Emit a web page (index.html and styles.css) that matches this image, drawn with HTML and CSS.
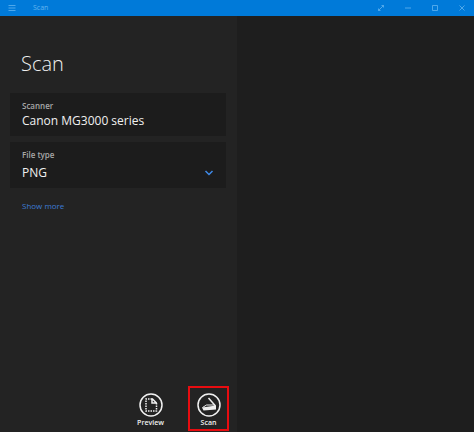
FILE: index.html
```
<!DOCTYPE html>
<html lang="en">
<head>
    <meta charset="UTF-8">
    <meta name="viewport" content="width=device-width, initial-scale=1.0">
    <title>Scan</title>
    <link rel="stylesheet" href="styles.css">
</head>
<body>
    <header class="titlebar">
        <button class="bar-button" type="button" aria-label="Menu">
            <svg viewBox="0 0 8 8"><path d="M0.5 1.5h7M0.5 4h7M0.5 6.5h7"/></svg>
        </button>
        <span class="app-name">Scan</span>
        <div class="window-buttons">
            <button class="bar-button" type="button" aria-label="Full screen">
                <svg viewBox="0 0 8 8"><path d="M1.5 6.5l5-5M4.5 1.5h2v2M1.5 4.5v2h2"/></svg>
            </button>
            <button class="bar-button" type="button" aria-label="Minimize">
                <svg viewBox="0 0 8 8"><path d="M1 4h6"/></svg>
            </button>
            <button class="bar-button" type="button" aria-label="Maximize">
                <svg viewBox="0 0 8 8"><path d="M1.5 1.5h5v5h-5z"/></svg>
            </button>
            <button class="bar-button" type="button" aria-label="Close">
                <svg viewBox="0 0 8 8"><path d="M1.5 1.5l5 5M6.5 1.5l-5 5"/></svg>
            </button>
        </div>
    </header>

    <main class="app">
        <section class="panel">
            <h1>Scan</h1>
            <div class="card">
                <span class="card-label">Scanner</span>
                <span class="card-value">Canon MG3000 series</span>
            </div>
            <div class="card">
                <label class="card-label" for="fileType">File type</label>
                <div class="select-row">
                    <select class="card-value file-type" id="fileType">
                        <option>PNG</option>
                    </select>
                    <svg class="chevron" viewBox="0 0 10 8"><path d="M1.5 2L5 5.5 8.5 2"/></svg>
                </div>
            </div>
            <a class="show-more" href="#">Show more</a>

            <div class="actions">
                <button class="action" type="button">
                    <svg viewBox="0 0 24 24">
                        <circle cx="12" cy="12" r="11"/>
                        <path class="dashed" d="M13 6H7v12h10.500v-8"/>
                        <path d="M13 5.500v4.500h5M13 5.500l4.500 4.500"/>
                    </svg>
                    <span>Preview</span>
                </button>
                <button class="action highlighted" type="button">
                    <svg viewBox="0 0 24 24">
                        <circle cx="12" cy="12" r="11"/>
                        <path d="M11.500 5l7 8"/>
                        <path class="thin" d="M5.500 14.500l4-2.500h8.500"/>
                        <path class="solid" d="M5 14.500l14-2v4l-12.500 1z"/>
                    </svg>
                    <span>Scan</span>
                </button>
            </div>
        </section>
        <section class="preview-area" aria-label="Preview area"></section>
    </main>
</body>
</html>
```

FILE: styles.css
```
* {
    box-sizing: border-box;
}
body {
    margin: 0;
    min-height: 100vh;
    display: flex;
    flex-direction: column;
    font-family: "Open Sans", "Noto Sans", sans-serif;
    background-color: #1e1e1e;
    color: #f0f0f0;
}
button {
    font-family: inherit;
    color: inherit;
    background: none;
    border: none;
    padding: 0;
    cursor: pointer;
}
svg {
    display: block;
    fill: none;
    stroke: currentColor;
}
.titlebar {
    display: flex;
    align-items: center;
    height: 16px;
    padding: 0 8px;
    background-color: #007ad9;
    color: #62b4f0;
}
.bar-button svg {
    width: 8px;
    height: 8px;
    stroke-width: 0.8;
}
.app-name {
    margin-left: 17px;
    font-size: 7px;
    line-height: 16px;
}
.window-buttons {
    display: flex;
    gap: 19px;
    margin-left: auto;
}
.app {
    flex: 1;
    display: flex;
}
.panel {
    width: 50%;
    display: flex;
    flex-direction: column;
    padding: 32px 11px 1px 10px;
    background-color: #232323;
}
.preview-area {
    flex: 1;
    background-color: #1e1e1e;
}
h1 {
    margin: 0 0 13px;
    padding-left: 11px;
    font-size: 20px;
    font-weight: 300;
    line-height: 32px;
}
.card {
    display: flex;
    flex-direction: column;
    padding: 7px 12px 6px;
    margin-bottom: 6px;
    background-color: #1c1c1c;
}
.card-label {
    font-size: 8px;
    font-weight: 600;
    line-height: 12px;
    color: #a8a8a8;
}
.card-value {
    font-size: 12px;
    line-height: 18px;
}
.select-row {
    display: flex;
    align-items: center;
    padding-top: 3px;
}
.file-type {
    flex: 1;
    appearance: none;
    padding: 0;
    border: none;
    background: none;
    color: inherit;
    font-family: inherit;
}
.chevron {
    width: 10px;
    height: 8px;
    color: #3f8ae8;
    stroke-width: 1.5;
}
.show-more {
    align-self: flex-start;
    margin: 6px 12px;
    font-size: 8px;
    line-height: 12px;
    color: #3d7bd4;
    text-decoration: none;
}
.actions {
    display: flex;
    justify-content: flex-end;
    gap: 17px;
    margin-top: auto;
    margin-right: -3px;
}
.action {
    display: flex;
    flex-direction: column;
    align-items: center;
    width: 41px;
    padding: 5px 0 0;
    border: 2px solid transparent;
    font-size: 7px;
    font-weight: 600;
    line-height: 12px;
}
.action svg {
    width: 24px;
    height: 24px;
    stroke-width: 1.5;
}
.action .dashed {
    stroke-dasharray: 1.5 1;
}
.action .thin {
    stroke-width: 1;
}
.action .solid {
    fill: currentColor;
    stroke: none;
}
.highlighted {
    border-color: #e80c10;
}
```
